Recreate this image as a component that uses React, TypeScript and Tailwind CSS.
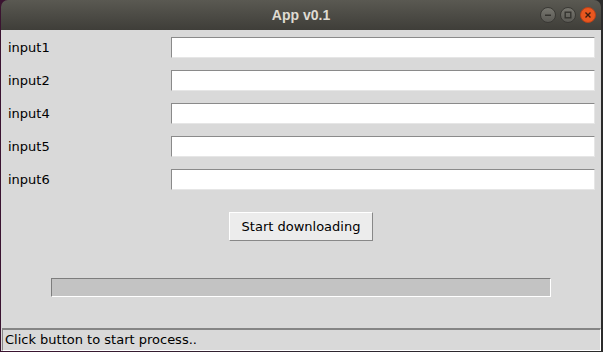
import React from 'react';

const rows = ['input1', 'input2', 'input4', 'input5', 'input6'];

// Small title bar button (minimize / maximize / close)
const TitleButton = ({ kind }: { kind: 'min' | 'max' | 'close' }) => {
  const close = kind === 'close';
  return (
    <div
      className={`w-[16px] h-[16px] rounded-full flex items-center justify-center border ${
        close
          ? 'bg-[#e9571f] border-[#b9421a]'
          : 'bg-gradient-to-b from-[#77766f] to-[#5a5954] border-[#3a3935]'
      }`}
    >
      <svg width="8" height="8" viewBox="0 0 8 8" fill="none" stroke={close ? '#3c1d10' : '#34332f'} strokeWidth="1.4">
        {kind === 'min' && <path d="M1 4.2 H7" />}
        {kind === 'max' && <rect x="1.2" y="1.2" width="5.6" height="5.6" />}
        {kind === 'close' && <path d="M1.5 1.5 L6.5 6.5 M6.5 1.5 L1.5 6.5" />}
      </svg>
    </div>
  );
};

export default function App() {
  return (
    <div className="w-[603px] h-[352px] bg-gradient-to-r from-[#3a1330] via-[#2e2530] to-[#2b2b2b] overflow-hidden">
      <div className="ml-[1px] w-[600px] h-[351px] rounded-t-[7px] overflow-hidden flex flex-col">
        {/* Title bar */}
        <div className="relative h-[30px] shrink-0 bg-gradient-to-b from-[#5a5952] to-[#3f3e39] flex items-center justify-center">
          <span className="text-[14px] font-bold text-[#dfdbd2] font-['Liberation_Sans',sans-serif]">App v0.1</span>
          <div className="absolute right-[5px] top-[7px] flex gap-[4px]">
            <TitleButton kind="min" />
            <TitleButton kind="max" />
            <TitleButton kind="close" />
          </div>
        </div>

        {/* Body */}
        <div className="flex-1 bg-[#d9d9d9] flex flex-col font-['DejaVu_Sans',sans-serif] text-[13px] text-black">
          <div className="pt-[7px] flex flex-col gap-[12px]">
            {rows.map((r) => (
              <div key={r} className="flex items-center h-[21px]">
                <span className="w-[170px] pl-[7px]">{r}</span>
                <div className="w-[424px] h-[21px] bg-white border border-t-[#8a8a8a] border-l-[#8a8a8a] border-b-[#e6e6e6] border-r-[#e6e6e6]" />
              </div>
            ))}
          </div>

          <div className="mt-[22px] flex justify-center">
            <button className="w-[144px] h-[29px] bg-[#ececec] border border-t-white border-l-white border-b-[#888888] border-r-[#888888]">
              Start downloading
            </button>
          </div>

          <div className="mt-[37px] mx-auto w-[500px] h-[19px] bg-[#c3c3c3] border border-t-[#7d7d7d] border-l-[#7d7d7d] border-b-white border-r-white" />

          <div className="mt-auto ml-[1px] h-[23px] bg-[#d9d9d9] border-t-2 border-t-[#858585] border-b border-b-white border-r border-r-white border-l border-l-[#858585] flex items-center pl-[2px]">
            Click button to start process..
          </div>
        </div>
      </div>
    </div>
  );
}
